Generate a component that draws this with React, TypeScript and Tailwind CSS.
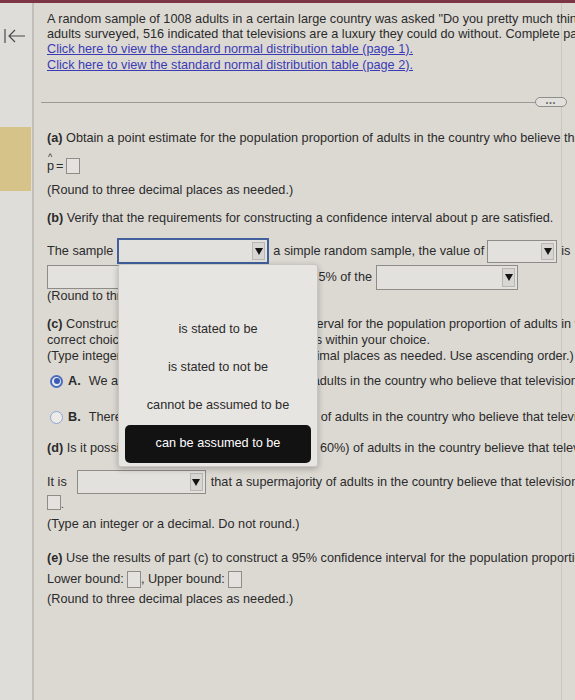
import React from 'react';

const font = { fontFamily: '"Liberation Sans", Arial, sans-serif' };

const Caret = () => (
  <svg width="8" height="8" viewBox="0 0 8 8">
    <path d="M0 1 H8 L4 8 Z" fill="#151515" />
  </svg>
);

interface SelectProps {
  className?: string;
  active?: boolean;
}

const SelectBox: React.FC<SelectProps> = ({ className = '', active }) => (
  <div
    className={`flex items-stretch shrink-0 bg-[#e3e1dd] ${
      active ? 'border-2 border-[#41609c]' : 'border border-[#8e8c88]'
    } ${className}`}
  >
    <div className="flex-1" />
    <div className="w-[13px] my-[2px] mr-[2px] flex items-center justify-center bg-[#d7d6d3] border border-[#b9b7b3]">
      <Caret />
    </div>
  </div>
);

const AnswerBox: React.FC<{ className?: string }> = ({ className = '' }) => (
  <span className={`inline-block shrink-0 border border-[#8e8c88] bg-[#e4e2de] ${className}`} />
);

const App: React.FC = () => {
  const options = ['', 'is stated to be', 'is stated to not be', 'cannot be assumed to be', 'can be assumed to be'];

  return (
    <div
      className="relative w-[575px] h-[700px] overflow-hidden bg-[#dcd9d3] text-[12.7px] text-[#2b2b2b] flex flex-col"
      style={font}
    >
      <div className="h-[3px] bg-[#7d3444] shrink-0" />
      <div className="flex flex-1">
        {/* left rail */}
        <div className="w-[34px] shrink-0 bg-[#dfddd9] border-r-2 border-[#c2bfba] flex flex-col">
          <div className="h-[25px]" />
          <svg width="24" height="16" viewBox="0 0 24 16" className="ml-[3px]">
            <path d="M2 1 V15" stroke="#4a4a4a" strokeWidth="1.2" />
            <path d="M22 8 H6 M12 2 L6 8 L12 14" stroke="#4a4a4a" strokeWidth="1.2" fill="none" />
          </svg>
          <div className="h-[83px]" />
          <div className="h-[64px] w-[31px] bg-[#d6c38a]" />
        </div>

        {/* main panel */}
        <div className="w-[528px] shrink-0 border-r border-[#cac7c1] pl-[13px] flex flex-col whitespace-nowrap leading-[15px]">
          <div className="pt-[9px] flex flex-col">
            <div className="h-[15px]">
              A random sample of 1008 adults in a certain large country was asked "Do you pretty much think televisions are a luxury they could do without?"
            </div>
            <div className="h-[15px]">
              adults surveyed, 516 indicated that televisions are a luxury they could do without. Complete parts (a) through (e) below.
            </div>
            <div className="h-[16px] text-[#3b3bb5] underline">Click here to view the standard normal distribution table (page 1).</div>
            <div className="h-[15px] text-[#3b3bb5] underline">Click here to view the standard normal distribution table (page 2).</div>
          </div>

          <div className="mt-[24px] h-[10px] flex items-center ml-[-6px] mr-[-6px]">
            <div className="flex-1 h-px bg-[#9b9994]" />
            <div className="w-[32px] h-[10px] shrink-0 rounded-full border border-[#8f8d89] bg-[#e2e0dc] flex items-center justify-center text-[7px] leading-none text-[#666] tracking-[1px]">
              •••
            </div>
          </div>

          <div className="mt-[23px] h-[16px] flex items-center">
            <b>(a)</b>&nbsp;Obtain a point estimate for the population proportion of adults in the country who believe that televisions are a luxury they could do without.
          </div>
          <div className="mt-[11px] h-[18px] flex items-center">
            <span className="relative inline-block">
              p
              <span className="absolute left-[1px] top-[-9px] text-[9px]">^</span>
            </span>
            <span className="ml-[2px]">=</span>
            <AnswerBox className="ml-[3px] w-[14px] h-[16px]" />
          </div>
          <div className="mt-[7px] h-[16px] flex items-center">(Round to three decimal places as needed.)</div>

          <div className="mt-[12px] h-[16px] flex items-center">
            <b>(b)</b>&nbsp;Verify that the requirements for constructing a confidence interval about p are satisfied.
          </div>
          <div className="mt-[12px] h-[26px] flex items-center">
            <span>The sample</span>
            <SelectBox active className="ml-[4px] w-[152px] h-[26px]" />
            <span className="ml-[4px]">a simple random sample, the value of</span>
            <SelectBox className="ml-[3px] w-[70px] h-[23px]" />
            <span className="ml-[4px]">is</span>
          </div>
          <div className="mt-[1px] h-[24px] flex items-center">
            <AnswerBox className="w-[118px] h-[24px]" />
            <span className="w-[207px] shrink-0 flex justify-end overflow-hidden">
              <span className="shrink-0">and the sample size is less than 5% of the</span>
            </span>
            <SelectBox className="ml-[4px] w-[142px] h-[25px]" />
          </div>
          <div className="h-[14px] flex items-center">(Round to three decimal places as needed.)</div>

          <div className="mt-[13px] flex flex-col leading-[16px]">
            <div className="h-[16px]">
              <b>(c)</b>&nbsp;Construct and interpret a 95% confidence interval for the population proportion of adults in the country who believe that televisions are a luxury
            </div>
            <div className="h-[16px]">correct choice below and fill in any answer boxes within your choice.</div>
            <div className="h-[16px]">(Type integers or decimals rounded to three decimal places as needed. Use ascending order.)</div>
          </div>
          <div className="mt-[8px] h-[18px] flex items-center">
            <span className="ml-[3px] shrink-0 w-[13px] h-[13px] rounded-full border-2 border-[#4a6cbf] bg-[#e8e8ef] flex items-center justify-center">
              <span className="w-[6px] h-[6px] rounded-full bg-[#3a5bb3]" />
            </span>
            <b className="ml-[5px] shrink-0">A.</b>
            <span className="ml-[8px] shrink-0">We are 95% confident the proportion of adults in the country who believe that televisions are a luxury they could do without is between</span>
          </div>
          <div className="mt-[18px] h-[18px] flex items-center">
            <span className="ml-[3px] shrink-0 w-[13px] h-[13px] rounded-full border border-[#8fa6d6] bg-[#ecebe8]" />
            <b className="ml-[5px] shrink-0">B.</b>
            <span className="ml-[8px] shrink-0">There is a 95% probability the proportion of adults in the country who believe that televisions are a luxury</span>
          </div>
          <div className="mt-[14px] h-[16px] flex items-center">
            <b>(d)</b>&nbsp;Is it possible that a supermajority (more than 60%) of adults in the country believe that televisions are a luxury they could do without?
          </div>

          <div className="mt-[14px] h-[24px] flex items-center">
            <span>It is</span>
            <SelectBox className="ml-[10px] w-[129px] h-[24px]" />
            <span className="ml-[5px]">that a supermajority of adults in the country believe that televisions are a luxury they could do without</span>
          </div>
          <div className="mt-[1px] h-[15px] flex items-end">
            <AnswerBox className="w-[14px] h-[15px]" />
            <span className="text-[10px] leading-none">.</span>
          </div>
          <div className="mt-[6px] h-[16px] flex items-center">(Type an integer or a decimal. Do not round.)</div>

          <div className="mt-[18px] h-[16px] flex items-center">
            <b>(e)</b>&nbsp;Use the results of part (c) to construct a 95% confidence interval for the population proportion of adults in the country who believe
          </div>
          <div className="mt-[4px] h-[18px] flex items-center">
            <span>Lower bound:</span>
            <AnswerBox className="ml-[3px] w-[14px] h-[17px]" />
            <span>, Upper bound:</span>
            <AnswerBox className="ml-[3px] w-[14px] h-[17px]" />
          </div>
          <div className="mt-[3px] h-[16px] flex items-center">(Round to three decimal places as needed.)</div>
        </div>
      </div>

      {/* open dropdown menu */}
      <div className="absolute left-[118px] top-[264px] w-[200px] h-[203px] bg-[#e7e5e1] border border-[#c9c7c3] rounded-[3px] shadow-[0_2px_6px_rgba(0,0,0,0.25)] pt-[8px] px-[6px] flex flex-col">
        {options.map((opt, i) => (
          <div
            key={i}
            className={`h-[38px] shrink-0 flex items-center justify-center whitespace-nowrap ${
              i === options.length - 1 ? 'bg-[#121212] text-white rounded-[5px]' : ''
            }`}
          >
            {opt}
          </div>
        ))}
      </div>
    </div>
  );
};

export default App;
